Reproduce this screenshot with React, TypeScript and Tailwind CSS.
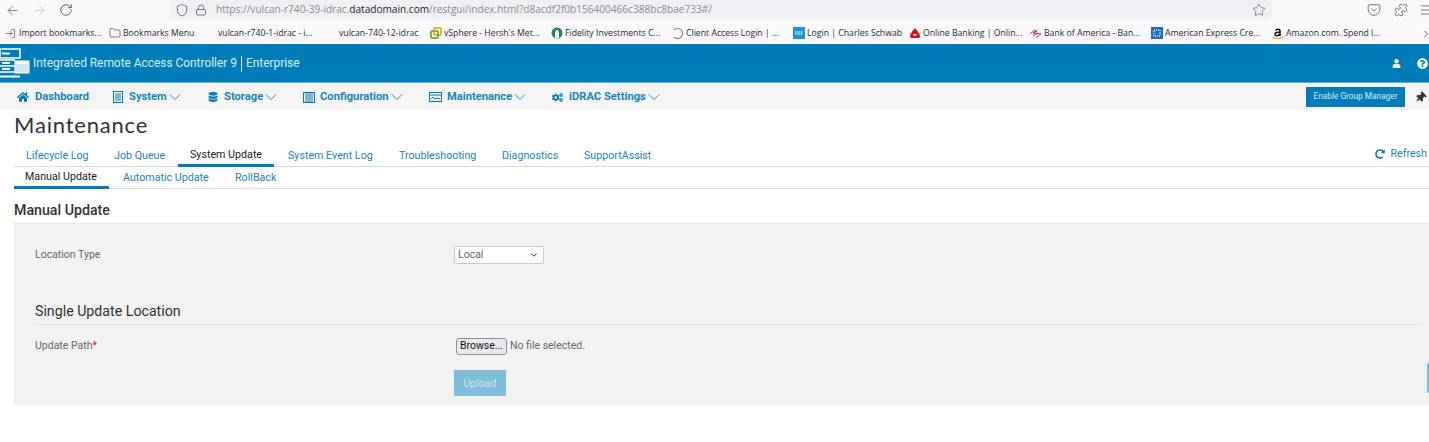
import React from "react";
import { ArrowLeft, ArrowRight, RotateCw, Shield, Lock, Star, Puzzle, Menu, ChevronDown, ChevronRight, Folder, LogIn, Pocket } from "lucide-react";
import { FaHome, FaDatabase, FaUser, FaQuestionCircle, FaThumbtack, FaCogs, FaRedoAlt } from "react-icons/fa";

const Bm = ({ w, icon, text }: { w: string; icon?: React.ReactNode; text: string }) => (
  <div className={`${w} flex shrink-0 items-center gap-[2px] overflow-hidden whitespace-nowrap`}>
    {icon ? <span className="flex w-[13px] shrink-0 items-center justify-center">{icon}</span> : null}
    <span>{text}</span>
  </div>
);

const ServerIcon = () => (
  <svg width="30" height="30" viewBox="0 0 30 30" fill="none" stroke="#ffffff" strokeWidth="1.5">
    <rect x="0" y="1" width="20" height="9" />
    <path d="M2 5.5h8" strokeWidth="2" />
    <path d="M0 12h15M0 18h15M0 24h15" />
    <path d="M2 15h8M2 21h8" strokeWidth="2" />
    <path d="M0 28.5h20" strokeWidth="2" />
    <rect x="15" y="13" width="14" height="12" fill="#cfe6f3" stroke="#ffffff" strokeWidth="1" />
    <rect x="15" y="13" width="14" height="3" fill="#ffffff" stroke="none" />
  </svg>
);

const ListIcon = () => (
  <svg width="10" height="12" viewBox="0 0 10 12" fill="none" stroke="#007db8" strokeWidth="1">
    <rect x="0.5" y="0.5" width="9" height="11" />
    <path d="M2 3h6M2 5h6M2 7h6M2 9h6" />
  </svg>
);
const ConfigIcon = () => (
  <svg width="12" height="11" viewBox="0 0 12 11" fill="none" stroke="#007db8" strokeWidth="1">
    <rect x="0.5" y="0.5" width="11" height="10" />
    <path d="M3 1v9M5 1v9M7 1v9M9 1v9" />
  </svg>
);
const MaintIcon = () => (
  <svg width="13" height="10" viewBox="0 0 13 10" fill="none" stroke="#007db8" strokeWidth="1">
    <rect x="0.5" y="0.5" width="12" height="9" />
    <path d="M0.5 3h12M2 7l2-2 2 2 2-1 3 1" />
  </svg>
);

const VSphere = () => (
  <svg width="12" height="12" viewBox="0 0 12 12" fill="none" strokeWidth="2">
    <rect x="4" y="1" width="7" height="7" rx="1" stroke="#f0b429" />
    <rect x="1" y="4" width="7" height="7" rx="1" stroke="#7cb342" />
  </svg>
);
const Fidelity = () => (
  <svg width="12" height="12" viewBox="0 0 12 12">
    <circle cx="6" cy="6" r="5.5" fill="#2e7d5b" />
    <path d="M6 3c1.5 0 2 2 2 3v5H4V6c0-1 .5-3 2-3z" fill="#f4f8f6" />
  </svg>
);
const Schwab = () => (
  <svg width="12" height="12" viewBox="0 0 12 12">
    <rect width="12" height="12" fill="#1c96d4" />
    <path d="M2 5h8M2 7h8" stroke="#ffffff" strokeWidth="1" strokeDasharray="1.5 .5" />
  </svg>
);
const Flame = () => (
  <svg width="12" height="12" viewBox="0 0 12 12" fill="#e3101a">
    <path d="M6 1c1 1.500 3 3 3.500 5 .8 0 1.500 1.500 1.500 3 0 1.500-1 2-2 2H3c-1 0-2-.5-2-2 0-1.500.7-3 1.500-3C3 4 5 2.500 6 1z" />
    <path d="M4.500 7h3v1.500h-3z" fill="#ffffff" />
  </svg>
);
const BoA = () => (
  <svg width="13" height="9" viewBox="0 0 13 9" fill="none" strokeWidth="1">
    <path d="M1 4.500 6 1l2 1-4 3M4 7l4-3 4 1-5 3.500" stroke="#d3324c" />
    <path d="M4 4l3-2M6 6l3-2" stroke="#3a4f8c" />
  </svg>
);
const Amex = () => (
  <svg width="12" height="12" viewBox="0 0 12 12">
    <rect width="12" height="12" fill="#1f6fc4" />
    <path d="M3 3h6v6H3z" fill="none" stroke="#cfe2f5" strokeWidth="1.500" strokeDasharray="1 1" />
  </svg>
);
const Amazon = () => (
  <svg width="12" height="13" viewBox="0 0 12 13" fill="none">
    <path d="M3.500 3.500C4 2 8 1.500 8 4v5M8 5C4 5 3 6 3 7.500S6.500 9.500 8 7" stroke="#111" strokeWidth="1.500" />
    <path d="M1 10c3 2 7 2 10 0" stroke="#f39c12" strokeWidth="1.200" />
  </svg>
);

const NavItem = ({ icon, text, w, gap, chevron = true }: { icon: React.ReactNode; text: string; w: string; gap: string; chevron?: boolean }) => (
  <div className={`${w} flex shrink-0 items-center`}>
    <span className={`${gap} flex shrink-0 items-center`}>{icon}</span>
    <span className="text-[11.2px] font-bold whitespace-nowrap text-[#1a83b9]">{text}</span>
    {chevron ? <ChevronDown size={20} strokeWidth={1.1} className="-mx-[2px] -my-[4px] text-[#1a83b9]" /> : null}
  </div>
);

export default function App() {
  return (
    <div className="relative h-[442px] w-[1429px] overflow-hidden bg-white font-['Roboto',sans-serif]">
      {/* browser toolbar */}
      <div className="flex h-[20px] items-center bg-[#f9f9fb] text-[#5b5b66]">
        <div className="flex w-[169px] shrink-0 items-center pl-[5px]">
          <ArrowLeft size={15} strokeWidth={1.4} className="text-[#6f6f78]" />
          <ArrowRight size={15} strokeWidth={1.4} className="ml-[12px] text-[#c4c4c8]" />
          <RotateCw size={14} strokeWidth={1.6} className="ml-[12px]" />
        </div>
        <div className="flex h-[20px] w-[1103px] shrink-0 items-center rounded-br-[4px] rounded-bl-[4px] bg-[#f0f0f4] pl-[6px] font-['Open_Sans',sans-serif] text-[10.08px]">
          <Shield size={14} strokeWidth={1.4} />
          <Lock size={12} strokeWidth={1.6} className="ml-[6px]" />
          <span className="ml-[9px] whitespace-nowrap text-[#8a8a90]">
            https://vulcan-r740-39-idrac.<span className="text-[#222228]">datadomain.com</span>/restgui/index.html?d8acdf2f0b156400466c388bc8bae733#/
          </span>
          <Star size={14} strokeWidth={1.2} className="mr-[6px] ml-auto" />
        </div>
        <Pocket size={14} strokeWidth={1.4} className="ml-[95px] shrink-0" />
        <Puzzle size={14} strokeWidth={1.4} className="ml-[13px] shrink-0" />
        <Menu size={14} strokeWidth={1.4} className="ml-[11px] shrink-0" />
      </div>
      {/* bookmarks */}
      <div className="flex h-[24px] items-center bg-[#f9f9fb] pt-[3px] pl-[4px] font-['Open_Sans',sans-serif] text-[8.7px] text-[#2a2a2e]">
        <Bm w="w-[104px]" icon={<LogIn size={11} strokeWidth={1.3} />} text="Import bookmarks..." />
        <Bm w="w-[108px]" icon={<Folder size={12} strokeWidth={1.2} />} text="Bookmarks Menu" />
        <div className="w-[123px] shrink-0 pl-[2px] whitespace-nowrap">vulcan-r740-1-idrac - i...</div>
        <div className="w-[90px] shrink-0 whitespace-nowrap">vulcan-740-12-idrac</div>
        <Bm w="w-[121px]" icon={<VSphere />} text="vSphere - Hersh's Met..." />
        <Bm w="w-[121px]" icon={<Fidelity />} text="Fidelity Investments C..." />
        <Bm w="w-[121px]" icon={<span className="block h-[11px] w-[11px] rounded-full border border-[#777] border-l-transparent" />} text="Client Access Login | ..." />
        <Bm w="w-[116px]" icon={<Schwab />} text="Login | Charles Schwab" />
        <Bm w="w-[121px]" icon={<Flame />} text="Online Banking | Onlin..." />
        <Bm w="w-[121px]" icon={<BoA />} text="Bank of America - Ban..." />
        <Bm w="w-[121px]" icon={<Amex />} text="American Express Cre..." />
        <Bm w="w-[122px]" icon={<Amazon />} text="Amazon.com. Spend l..." />
        <ChevronRight size={12} strokeWidth={1.4} className="ml-[27px] shrink-0" />
      </div>
      {/* blue header */}
      <div className="flex h-[39px] items-center border-b border-[#5db0d8] bg-[#007db8] text-white">
        <ServerIcon />
        <span className="mt-[2px] ml-[3px] text-[11.9px] whitespace-nowrap text-[#dcecf5]">Integrated Remote Access Controller 9</span>
        <span className="mx-[4px] mt-[2px] h-[16px] w-px bg-[#dcecf5]" />
        <span className="mt-[2px] text-[11.9px] text-[#dcecf5]">Enterprise</span>
        <FaUser size={9} className="mt-[1px] ml-auto" />
        <FaQuestionCircle size={11} className="mt-[1px] mr-[1px] ml-[16px]" />
      </div>
      {/* nav */}
      <div className="flex h-[27px] items-center bg-[#f5f5f5] pt-[2px] pl-[17px]">
        <NavItem w="w-[96px]" gap="w-[18px]" icon={<FaHome size={12} color="#007db8" />} text="Dashboard" chevron={false} />
        <NavItem w="w-[95px]" gap="w-[16px]" icon={<ListIcon />} text="System" />
        <NavItem w="w-[95px]" gap="w-[16px]" icon={<FaDatabase size={10} color="#007db8" />} text="Storage" />
        <NavItem w="w-[126px]" gap="w-[17px]" icon={<ConfigIcon />} text="Configuration" />
        <NavItem w="w-[123px]" gap="w-[18px]" icon={<MaintIcon />} text="Maintenance" />
        <NavItem w="w-[115px]" gap="w-[17px]" icon={<FaCogs size={11} color="#007db8" />} text="iDRAC Settings" />
        <button className="-mt-[2px] ml-auto h-[20px] w-[99px] bg-[#007db8] text-[8.3px] whitespace-nowrap text-[#d5e9f3]">Enable Group Manager</button>
        <FaThumbtack size={11} color="#333" className="mr-[3px] ml-[10px] rotate-45" />
      </div>
      {/* title */}
      <h1 className="mt-[2px] ml-[14px] h-[26px] font-['Lato',sans-serif] text-[22px] leading-[26px] tracking-[0.8px] text-[#333]">Maintenance</h1>
      {/* tabs */}
      <div className="mt-[7px] ml-[14px] flex h-[22px] items-end border-b border-[#dcdcdc] text-[10.7px]">
        <div className="flex h-[21px] w-[100px] items-center pt-[1px] pl-[12px] text-[#1a83b9]">Lifecycle Log</div>
        <div className="flex h-[21px] w-[64px] items-center pt-[1px] text-[#1a83b9]">Job Queue</div>
        <div className="-mb-px flex h-[22px] w-[96px] items-center border-b-[3px] border-[#007db8] pt-[1px] pl-[12px] text-[#222]">System Update</div>
        <div className="flex h-[21px] w-[111px] items-center pt-[1px] pl-[14px] text-[#1a83b9]">System Event Log</div>
        <div className="flex h-[21px] w-[103px] items-center pt-[1px] pl-[14px] text-[#1a83b9]">Troubleshooting</div>
        <div className="flex h-[21px] w-[82px] items-center pt-[1px] pl-[14px] text-[#1a83b9]">Diagnostics</div>
        <div className="flex h-[21px] items-center pt-[1px] pl-[14px] text-[#1a83b9]">SupportAssist</div>
        <div className="mb-[4px] ml-auto flex items-center gap-[5px] pr-[2px] text-[#1a83b9]">
          <FaRedoAlt size={10} color="#007db8" />
          <span>Refresh</span>
        </div>
      </div>
      {/* subtabs */}
      <div className="ml-[14px] flex h-[22px] items-end border-b border-[#dcdcdc] text-[10.7px]">
        <div className="-mb-px flex h-[22px] w-[95px] items-center border-b-[3px] border-[#007db8] pt-[1px] pl-[11px] text-[#222]">Manual Update</div>
        <div className="flex h-[21px] w-[126px] items-center pt-[1px] pl-[14px] text-[#1a83b9]">Automatic Update</div>
        <div className="flex h-[21px] items-center pt-[1px] text-[#1a83b9]">RollBack</div>
      </div>
      {/* manual update heading */}
      <h2 className="mt-[12px] ml-[14px] h-[22px] text-[14.2px] leading-[18px] font-medium text-[#333]">Manual Update</h2>
      {/* panel */}
      <div className="ml-[14px] h-[182px] border-t border-[#e6e6e6] bg-[#f2f2f2] pr-[8px] pl-[21px] text-[10.5px] text-[#666]">
        <div className="mt-[22px] flex h-[18px] items-center">
          <span className="w-[419px] shrink-0">Location Type</span>
          <div className="flex h-[18px] w-[90px] items-center justify-between rounded-[2px] border border-[#ccc] bg-white pr-[4px] pl-[3px]">
            <span>Local</span>
            <ChevronDown size={10} strokeWidth={2.4} className="text-[#333]" />
          </div>
        </div>
        <h3 className="mt-[39px] h-[22px] border-b border-[#dddddd] text-[14.2px] leading-[17px] text-[#333]">Single Update Location</h3>
        <div className="mt-[12px] flex h-[18px] items-center">
          <span className="w-[421px] shrink-0">Update Path<span className="text-[#ce1126]">*</span></span>
          <div className="flex h-[17px] w-[51px] shrink-0 items-center justify-center rounded-[3px] border border-[#8f8f9d] bg-[#e9e9ed] text-[#111]">Browse...</div>
          <span className="ml-[3px]">No file selected.</span>
        </div>
        <div className="mt-[15px] ml-[419px] flex h-[26px] w-[52px] items-center justify-center bg-[#7fbddb] pt-[2px] text-[#cfe5f0]">Upload</div>
      </div>
      <div className="absolute top-[363px] right-0 h-[30px] w-[2px] rounded-l-[1px] bg-[#7fbddb]" />
    </div>
  );
}
